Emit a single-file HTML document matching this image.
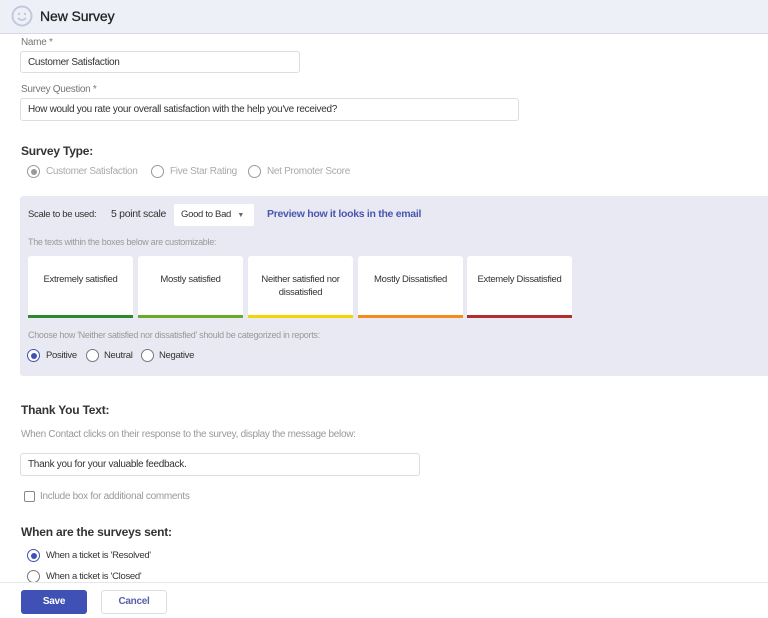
<!DOCTYPE html>
<html><head><style>
*{box-sizing:border-box;margin:0;padding:0}
body{width:768px;height:618px;overflow:hidden;background:#fff;font-family:"Liberation Sans",sans-serif;position:relative;color:#333;letter-spacing:-0.3px}
.a{position:absolute}
.lbl{font-size:10px;color:#777}
.inp{border:1px solid #ddd;border-radius:3px;background:#fff;font-size:10px;color:#333;padding-left:7px;display:flex;align-items:center}
.h{font-size:12px;font-weight:bold;color:#333;letter-spacing:-0.2px}
.r{width:13px;height:13px;border-radius:50%;border:1px solid #777;background:#fff}
.rs{border-color:#3f51b5}
.rs::after{content:"";position:absolute;left:2.5px;top:2.5px;width:6px;height:6px;border-radius:50%;background:#3f51b5}
.box{background:#fff;top:256px;height:62px;width:105px;font-size:9.5px;text-align:center;display:flex;justify-content:center;padding-top:17px;line-height:13px;border-radius:3px 3px 0 0}
</style></head><body>
<div class="a" style="left:0;top:0;width:768px;height:34px;background:#eef0f7;border-bottom:1px solid #d5d7e8"></div>
<svg class="a" style="left:11px;top:5px" width="22" height="22" viewBox="0 0 22 22"><circle cx="11" cy="11" r="9.5" fill="none" stroke="#c5c8dc" stroke-width="2"/><circle cx="8" cy="9" r="1.2" fill="#c5c8dc"/><circle cx="14" cy="9" r="1.2" fill="#c5c8dc"/><path d="M7 13 Q11 17 15 13" fill="none" stroke="#c5c8dc" stroke-width="1.6"/></svg>
<div class="a" style="left:40px;top:8px;font-size:14px;color:#222;letter-spacing:-0.1px;-webkit-text-stroke:0.3px #222">New Survey</div>
<div class="a lbl" style="left:21px;top:37px">Name *</div>
<div class="a inp" style="left:20px;top:51px;width:280px;height:22px">Customer Satisfaction</div>
<div class="a lbl" style="left:21px;top:84px">Survey Question *</div>
<div class="a inp" style="left:20px;top:98px;width:499px;height:23px">How would you rate your overall satisfaction with the help you've received?</div>
<div class="a h" style="left:21px;top:144px">Survey Type:</div>
<div class="a r" style="left:27px;top:165px;border-color:#999"><div class="a" style="left:2.5px;top:2.5px;width:6px;height:6px;border-radius:50%;background:#999"></div></div>
<div class="a lbl" style="left:46px;top:166px;color:#aaa">Customer Satisfaction</div>
<div class="a r" style="left:151px;top:165px;border-color:#999"></div>
<div class="a lbl" style="left:170px;top:166px;color:#aaa">Five Star Rating</div>
<div class="a r" style="left:248px;top:165px;border-color:#999"></div>
<div class="a lbl" style="left:267px;top:166px;color:#aaa">Net Promoter Score</div>
<div class="a" style="left:20px;top:196px;width:760px;height:180px;background:#e8e9f2;border-radius:3px"></div>
<div class="a" style="left:28px;top:209px;font-size:9.5px;color:#333">Scale to be used:</div>
<div class="a" style="left:111px;top:208px;font-size:10.5px;color:#333">5 point scale</div>
<div class="a" style="left:174px;top:204px;width:80px;height:22px;background:#fff;border-radius:2px;font-size:9.5px;padding:5px 0 0 7px">Good to Bad <span style="font-size:7px;color:#666;margin-left:4px">▼</span></div>
<div class="a" style="left:267px;top:208px;font-size:10.5px;font-weight:bold;color:#4a56b0">Preview how it looks in the email</div>
<div class="a" style="left:28px;top:237px;font-size:9px;color:#999">The texts within the boxes below are customizable:</div>
<div class="a box" style="left:28px;border-bottom:3px solid #2b8a2b">Extremely satisfied</div>
<div class="a box" style="left:138px;border-bottom:3px solid #6aaa2a">Mostly satisfied</div>
<div class="a box" style="left:248px;border-bottom:3px solid #f1d600">Neither satisfied nor<br>dissatisfied</div>
<div class="a box" style="left:358px;border-bottom:3px solid #f28c1c">Mostly Dissatisfied</div>
<div class="a box" style="left:467px;border-bottom:3px solid #b22e2e">Extemely Dissatisfied</div>
<div class="a" style="left:28px;top:330px;font-size:9px;color:#999">Choose how 'Neither satisfied nor dissatisfied' should be categorized in reports:</div>
<div class="a r rs" style="left:27px;top:349px"></div>
<div class="a" style="left:46px;top:350px;font-size:9.5px">Positive</div>
<div class="a r" style="left:86px;top:349px"></div>
<div class="a" style="left:104px;top:350px;font-size:9.5px">Neutral</div>
<div class="a r" style="left:141px;top:349px"></div>
<div class="a" style="left:159px;top:350px;font-size:9.5px">Negative</div>
<div class="a h" style="left:21px;top:403px">Thank You Text:</div>
<div class="a lbl" style="left:21px;top:429px;color:#999">When Contact clicks on their response to the survey, display the message below:</div>
<div class="a inp" style="left:20px;top:453px;width:400px;height:23px">Thank you for your valuable feedback.</div>
<div class="a" style="left:24px;top:491px;width:11px;height:11px;border:1px solid #888;border-radius:2px"></div>
<div class="a lbl" style="left:40px;top:491px;color:#999">Include box for additional comments</div>
<div class="a h" style="left:21px;top:525px">When are the surveys sent:</div>
<div class="a r rs" style="left:27px;top:549px"></div>
<div class="a" style="left:46px;top:550px;font-size:9.5px">When a ticket is 'Resolved'</div>
<div class="a r" style="left:27px;top:570px"></div>
<div class="a" style="left:46px;top:571px;font-size:9.5px">When a ticket is 'Closed'</div>
<div class="a" style="left:0;top:582px;width:768px;height:36px;background:#fff;border-top:1px solid #e6e6ee"></div>
<div class="a" style="left:21px;top:590px;width:66px;height:24px;background:#3f51b5;border-radius:3px;color:#fff;font-size:10px;font-weight:bold;text-align:center;line-height:24px">Save</div>
<div class="a" style="left:101px;top:590px;width:66px;height:24px;border:1px solid #ddd;border-radius:3px;color:#5a5fa8;font-size:10px;font-weight:bold;text-align:center;line-height:22px">Cancel</div>
</body></html>
